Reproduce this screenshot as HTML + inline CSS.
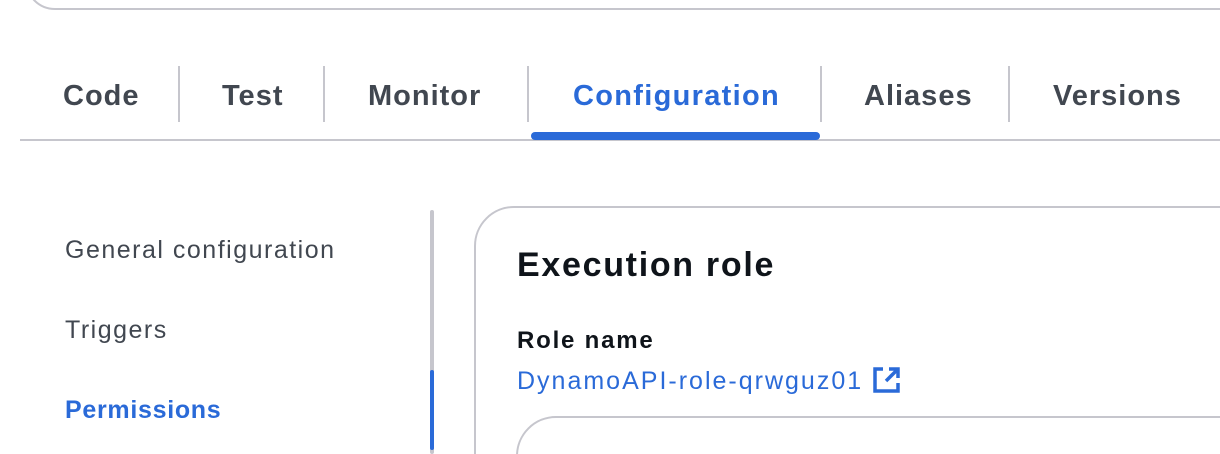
<!DOCTYPE html>
<html><head><style>
html,body{margin:0;padding:0;background:#fff;width:1220px;height:454px;overflow:hidden;font-family:"Liberation Sans",sans-serif;}
#w{position:relative;width:1220px;height:454px;overflow:hidden}
.abs{position:absolute;white-space:nowrap}
.tab{position:absolute;top:76px;font-size:29px;font-weight:bold;color:#414750;line-height:40px;letter-spacing:1px}
.sep{position:absolute;top:66px;width:2px;height:56px;background:#c6c6cd}
.nav{position:absolute;left:65px;font-size:25px;color:#414750;line-height:30px;letter-spacing:1.5px}
</style></head><body><div id="w">
<div class="abs" style="left:25px;top:-60px;width:1300px;height:66px;border:2px solid #c6c6cd;border-radius:30px"></div>
<div class="tab" style="left:63px">Code</div>
<div class="sep" style="left:178px"></div>
<div class="tab" style="left:222px">Test</div>
<div class="sep" style="left:323px"></div>
<div class="tab" style="left:368px">Monitor</div>
<div class="sep" style="left:527px"></div>
<div class="tab" style="left:573px;color:#2a6ad8;letter-spacing:1.3px">Configuration</div>
<div class="sep" style="left:820px"></div>
<div class="tab" style="left:864px">Aliases</div>
<div class="sep" style="left:1008px"></div>
<div class="tab" style="left:1053px">Versions</div>
<div class="abs" style="left:20px;top:139px;width:1200px;height:2px;background:#c6c6cd"></div>
<div class="abs" style="left:531px;top:132px;width:289px;height:8px;background:#2a6ad8;border-radius:4px"></div>

<div class="nav" style="top:235px">General configuration</div>
<div class="nav" style="top:315px">Triggers</div>
<div class="nav" style="top:395px;color:#2a6ad8;font-weight:bold;letter-spacing:0.7px">Permissions</div>
<div class="abs" style="left:430px;top:210px;width:4px;height:244px;background:#c6c6cd;border-radius:2px"></div>
<div class="abs" style="left:430px;top:370px;width:4px;height:80px;background:#2a6ad8;border-radius:2px"></div>

<div class="abs" style="left:474px;top:206px;width:800px;height:400px;border:2px solid #c6c6cd;border-radius:40px"></div>
<div class="abs" style="left:517px;top:244px;font-size:34px;font-weight:bold;color:#0f141a;line-height:42px;letter-spacing:1.7px">Execution role</div>
<div class="abs" style="left:517px;top:326px;font-size:24px;font-weight:bold;color:#0f141a;line-height:30px;letter-spacing:1.8px">Role name</div>
<div class="abs" style="left:517px;top:366px;font-size:25px;color:#2a6ad8;line-height:30px;letter-spacing:2px">DynamoAPI-role-qrwguz01</div>
<svg class="abs" style="left:872px;top:366px" width="30" height="28" viewBox="0 0 30 28"><path d="M11 3H3v22h23v-8" fill="none" stroke="#2a6ad8" stroke-width="3.5"/><path d="M17 3h9v9M26 3L14 15" fill="none" stroke="#2a6ad8" stroke-width="3.5"/></svg>
<div class="abs" style="left:516px;top:416px;width:800px;height:200px;border:2px solid #c6c6cd;border-radius:40px"></div>
</div></body></html>
